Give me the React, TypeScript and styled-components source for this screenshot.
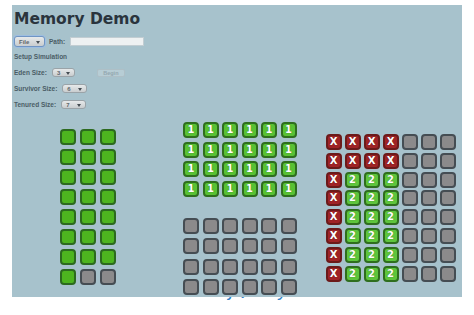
import React from 'react';
import styled, { createGlobalStyle, css } from 'styled-components';

type CellKind = 'green' | 'gray' | 'one' | 'two' | 'dead';

const leftRows: CellKind[][] = [
  ...Array.from({ length: 7 }, () => ['green', 'green', 'green'] as CellKind[]),
  ['green', 'gray', 'gray'],
];

const edenRows: CellKind[][] = Array.from({ length: 4 }, () =>
  Array.from({ length: 6 }, () => 'one' as CellKind),
);

const edenFreeRows: CellKind[][] = Array.from({ length: 4 }, () =>
  Array.from({ length: 6 }, () => 'gray' as CellKind),
);

const tenuredRows: CellKind[][] = [
  ['dead', 'dead', 'dead', 'dead', 'gray', 'gray', 'gray'],
  ['dead', 'dead', 'dead', 'dead', 'gray', 'gray', 'gray'],
  ...Array.from(
    { length: 6 },
    () => ['dead', 'two', 'two', 'two', 'gray', 'gray', 'gray'] as CellKind[],
  ),
];

const label: Record<CellKind, string> = {
  green: '',
  gray: '',
  one: '1',
  two: '2',
  dead: 'X',
};

const Grid: React.FC<{ rows: CellKind[][]; gap: number; rowGap: number }> = ({ rows, gap, rowGap }) => (
  <CellGrid $cols={rows[0].length} $gap={gap} $rowGap={rowGap}>
    {rows.flat().map((kind, i) => (
      <Cell key={i} $kind={kind}>
        {label[kind]}
      </Cell>
    ))}
  </CellGrid>
);

const App: React.FC = () => {
  return (
    <>
      <GlobalStyle />
      <Page>
        <Panel>
          <Header>
            <Title>Memory Demo</Title>
            <FileRow>
              <Dropdown $focused $width={31}>
                File
              </Dropdown>
              <Label>Path:</Label>
              <PathInput />
            </FileRow>
            <SectionTitle>Setup Simulation</SectionTitle>
            <SizeRow>
              <Label>Eden Size:</Label>
              <Dropdown $width={23}>3</Dropdown>
              <BeginButton>Begin</BeginButton>
            </SizeRow>
            <SizeRow>
              <Label>Survivor Size:</Label>
              <Dropdown $width={25}>6</Dropdown>
            </SizeRow>
            <SizeRow>
              <Label>Tenured Size:</Label>
              <Dropdown $width={25}>7</Dropdown>
            </SizeRow>
          </Header>
          <Board>
            <Region $top={13} $gap={67}>
              <Grid rows={leftRows} gap={4} rowGap={4} />
            </Region>
            <Region $top={6} $gap={29}>
              <Grid rows={edenRows} gap={3.5} rowGap={3.7} />
              <Spacer />
              <Grid rows={edenFreeRows} gap={3.5} rowGap={4.3} />
            </Region>
            <Region $top={18}>
              <Grid rows={tenuredRows} gap={3} rowGap={2.8} />
            </Region>
          </Board>
        </Panel>
        <Footer>
          <Logo>jQuery</Logo>
        </Footer>
      </Page>
    </>
  );
};

const GlobalStyle = createGlobalStyle`
  html, body {
    margin: 0;
    background: #ffffff;
  }
  body {
    font-family: 'Liberation Sans', Arial, sans-serif;
  }
`;

const Page = styled.div`
  padding: 5px 0 0 12px;
`;

const Panel = styled.div`
  box-sizing: border-box;
  width: 450px;
  height: 292px;
  background: #a7c2cc;
  padding: 4px 0 0 2px;
  overflow: hidden;
`;

const Header = styled.div`
  height: 107px;
  display: flex;
  flex-direction: column;
`;

const Title = styled.h1`
  margin: 0;
  font-family: 'DejaVu Sans', sans-serif;
  font-weight: bold;
  font-size: 15.5px;
  line-height: 20px;
  color: #2a343d;
`;

const FileRow = styled.div`
  display: flex;
  align-items: center;
  gap: 4px;
  margin-top: 7px;
  height: 11px;
`;

const SizeRow = styled.div`
  display: flex;
  align-items: center;
  gap: 5px;
  height: 9px;
  margin-top: 7px;
`;

const Label = styled.span`
  font-size: 6.5px;
  font-weight: bold;
  color: #4b5d66;
  white-space: nowrap;
`;

const SectionTitle = styled(Label)`
  display: block;
  margin-top: 6px;
  line-height: 8px;
`;

const Dropdown = styled.span<{ $focused?: boolean; $width: number }>`
  box-sizing: border-box;
  position: relative;
  display: inline-flex;
  align-items: center;
  width: ${(p) => p.$width}px;
  height: ${(p) => (p.$focused ? 11 : 9)}px;
  padding-left: 4px;
  border-radius: 3px;
  background: linear-gradient(#e6e9ea, #c9cdcf);
  border: 1px solid ${(p) => (p.$focused ? '#6f95c4' : '#9aa3a8')};
  box-shadow: ${(p) => (p.$focused ? '0 0 0 1px #9dbde0' : 'none')};
  font-size: 6px;
  font-weight: bold;
  color: #5e666b;

  &::after {
    content: '';
    position: absolute;
    right: 4px;
    top: 50%;
    margin-top: -1px;
    border-left: 2px solid transparent;
    border-right: 2px solid transparent;
    border-top: 3px solid #444c52;
  }
`;

const PathInput = styled.span`
  box-sizing: border-box;
  display: block;
  width: 74px;
  height: 9px;
  margin-left: 1px;
  background: #eef1f2;
  border: 1px solid #c2cdd2;
`;

const BeginButton = styled.span`
  box-sizing: border-box;
  display: inline-flex;
  align-items: center;
  justify-content: center;
  width: 28px;
  height: 8px;
  margin-left: 17px;
  border-radius: 2px;
  background: #b7cdd5;
  border: 1px solid #aebfc6;
  font-size: 5.5px;
  font-weight: bold;
  color: #93a7af;
`;

const Board = styled.div`
  display: flex;
  align-items: flex-start;
  padding-left: 46px;
`;

const Region = styled.div<{ $top: number; $gap?: number }>`
  display: flex;
  flex-direction: column;
  margin-top: ${(p) => p.$top}px;
  margin-right: ${(p) => p.$gap ?? 0}px;
`;

const Spacer = styled.div`
  height: 21px;
`;

const CellGrid = styled.div<{ $cols: number; $gap: number; $rowGap: number }>`
  display: grid;
  grid-template-columns: repeat(${(p) => p.$cols}, 16px);
  grid-auto-rows: 16px;
  column-gap: ${(p) => p.$gap}px;
  row-gap: ${(p) => p.$rowGap}px;
`;

const cellColors: Record<CellKind, ReturnType<typeof css>> = {
  green: css`
    background: #4db51f;
    border-color: #2c6a1f;
  `,
  gray: css`
    background: #8b8a8b;
    border-color: #454d53;
  `,
  one: css`
    background: #58c133;
    border-color: #2f6e1e;
  `,
  two: css`
    background: #5ec53c;
    border-color: #2f6e1e;
  `,
  dead: css`
    background: #9f2326;
    border-color: #6b1a1a;
  `,
};

const Cell = styled.div<{ $kind: CellKind }>`
  box-sizing: border-box;
  width: 16px;
  height: 16px;
  border: 2px solid;
  border-radius: 4px;
  display: flex;
  align-items: center;
  justify-content: center;
  font-family: 'DejaVu Sans', sans-serif;
  font-weight: bold;
  font-size: 10px;
  line-height: 1;
  color: #ffffff;
  text-shadow: 0 0 1px rgba(0, 0, 0, 0.5);
  ${(p) => cellColors[p.$kind]}
`;

/* the page's logo sits mostly under the panel; only its lower edge shows */
const Footer = styled.div`
  height: 18px;
  overflow: hidden;
  padding-left: 217px;
`;

const Logo = styled.div`
  margin-top: -16px;
  font-family: 'DejaVu Sans', sans-serif;
  font-size: 18px;
  font-style: italic;
  color: #2f7fc7;
  line-height: 18px;
`;

export default App;
